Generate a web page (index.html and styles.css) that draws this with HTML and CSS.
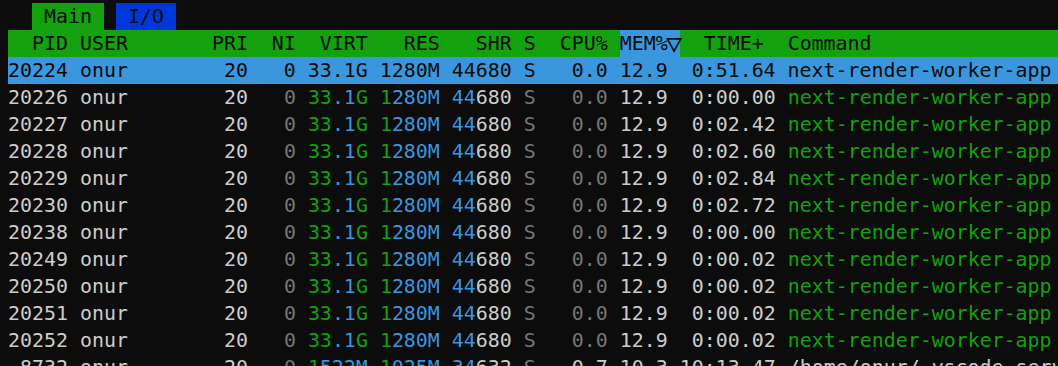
FILE: index.html
```html
<!DOCTYPE html>
<html lang="en">
<head>
    <meta charset="UTF-8">
    <title>htop</title>
    <link rel="stylesheet" href="styles.css">
</head>
<body>
    <div class="term">
        <div class="tabs"><span class="tab main"> Main </span> <span class="tab io"> I/O </span></div>
        <div class="row head">  PID USER       PRI  NI  VIRT   RES   SHR S  CPU% <span class="sort">MEM%<span class="arrow">▽</span></span>  TIME+  Command</div>
        <div class="row sel">20224 onur        20   0 33.1G 1280M 44680 S   0.0 12.9  0:51.64 next-render-worker-app</div>
        <div class="row">20226 onur        20   <span class="d">0</span> <span class="g">33</span><span class="c">.1</span><span class="g">G</span> <span class="g">1</span><span class="c">280M</span> <span class="c">44</span>680 <span class="d">S</span>   <span class="d">0.0</span> 12.9  0:00.00 <span class="g">next-render-worker-app</span></div>
        <div class="row">20227 onur        20   <span class="d">0</span> <span class="g">33</span><span class="c">.1</span><span class="g">G</span> <span class="g">1</span><span class="c">280M</span> <span class="c">44</span>680 <span class="d">S</span>   <span class="d">0.0</span> 12.9  0:02.42 <span class="g">next-render-worker-app</span></div>
        <div class="row">20228 onur        20   <span class="d">0</span> <span class="g">33</span><span class="c">.1</span><span class="g">G</span> <span class="g">1</span><span class="c">280M</span> <span class="c">44</span>680 <span class="d">S</span>   <span class="d">0.0</span> 12.9  0:02.60 <span class="g">next-render-worker-app</span></div>
        <div class="row">20229 onur        20   <span class="d">0</span> <span class="g">33</span><span class="c">.1</span><span class="g">G</span> <span class="g">1</span><span class="c">280M</span> <span class="c">44</span>680 <span class="d">S</span>   <span class="d">0.0</span> 12.9  0:02.84 <span class="g">next-render-worker-app</span></div>
        <div class="row">20230 onur        20   <span class="d">0</span> <span class="g">33</span><span class="c">.1</span><span class="g">G</span> <span class="g">1</span><span class="c">280M</span> <span class="c">44</span>680 <span class="d">S</span>   <span class="d">0.0</span> 12.9  0:02.72 <span class="g">next-render-worker-app</span></div>
        <div class="row">20238 onur        20   <span class="d">0</span> <span class="g">33</span><span class="c">.1</span><span class="g">G</span> <span class="g">1</span><span class="c">280M</span> <span class="c">44</span>680 <span class="d">S</span>   <span class="d">0.0</span> 12.9  0:00.00 <span class="g">next-render-worker-app</span></div>
        <div class="row">20249 onur        20   <span class="d">0</span> <span class="g">33</span><span class="c">.1</span><span class="g">G</span> <span class="g">1</span><span class="c">280M</span> <span class="c">44</span>680 <span class="d">S</span>   <span class="d">0.0</span> 12.9  0:00.02 <span class="g">next-render-worker-app</span></div>
        <div class="row">20250 onur        20   <span class="d">0</span> <span class="g">33</span><span class="c">.1</span><span class="g">G</span> <span class="g">1</span><span class="c">280M</span> <span class="c">44</span>680 <span class="d">S</span>   <span class="d">0.0</span> 12.9  0:00.02 <span class="g">next-render-worker-app</span></div>
        <div class="row">20251 onur        20   <span class="d">0</span> <span class="g">33</span><span class="c">.1</span><span class="g">G</span> <span class="g">1</span><span class="c">280M</span> <span class="c">44</span>680 <span class="d">S</span>   <span class="d">0.0</span> 12.9  0:00.02 <span class="g">next-render-worker-app</span></div>
        <div class="row">20252 onur        20   <span class="d">0</span> <span class="g">33</span><span class="c">.1</span><span class="g">G</span> <span class="g">1</span><span class="c">280M</span> <span class="c">44</span>680 <span class="d">S</span>   <span class="d">0.0</span> 12.9  0:00.02 <span class="g">next-render-worker-app</span></div>
        <div class="row"> 8732 onur        20   <span class="d">0</span> <span class="g">1</span><span class="c">522M</span> <span class="g">1</span><span class="c">025M</span> <span class="c">34</span>632 <span class="d">S</span>   0.7 10.3 10:13.47 /home/onur/.vscode-server/bin/node</div>
    </div>
</body>
</html>
```

FILE: styles.css
```css
html, body {
    margin: 0;
    background-color: #0c0c0c;
    overflow: hidden;
}
.term {
    padding: 3px 0 0 8px;
    font-family: "DejaVu Sans Mono", monospace;
    font-size: 19.93px;
    line-height: 27px;
    color: #cccccc;
}
.tabs,
.row {
    height: 27px;
    white-space: pre;
    overflow: hidden;
}
.tabs {
    padding-left: 24px;
}
.tab {
    display: inline-block;
    color: #0c0c0c;
}
.tab.main {
    background-color: #13a10e;
}
.tab.io {
    background-color: #0037da;
}
.head {
    background-color: #13a10e;
    color: #0c0c0c;
}
.sort {
    display: inline-block;
    background-color: #3a96dd;
}
.arrow {
    display: inline-block;
    width: 12px;
    text-align: center;
    transform: scale(1.35, 1.25);
}
.sel {
    background-color: #3a96dd;
    color: #0c0c0c;
}
.g {
    color: #13a10e;
}
.c {
    color: #3a96dd;
}
.d {
    color: #767676;
}
```
